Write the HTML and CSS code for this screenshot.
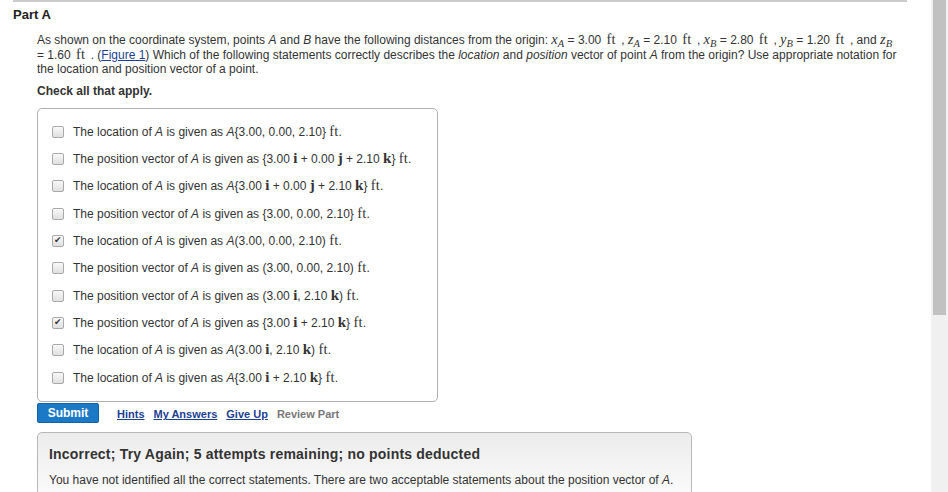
FILE: index.html
```html
<!DOCTYPE html>
<html lang="en">
<head>
    <meta charset="UTF-8">
    <title>Part A</title>
    <link rel="stylesheet" href="styles.css">
</head>
<body>

<div class="page">
    <div class="part">
        <h2 class="part-title">Part A</h2>

        <div class="part-body">
            <p class="prompt">
                As shown on the coordinate system, points <i>A</i> and <i>B</i> have the following distances from the origin:
                <span class="m"><i>x</i><sub>A</sub></span> = 3.00 <span class="unit">ft</span> ,
                <span class="m"><i>z</i><sub>A</sub></span> = 2.10 <span class="unit">ft</span> ,
                <span class="m"><i>x</i><sub>B</sub></span> = 2.80 <span class="unit">ft</span> ,
                <span class="m"><i>y</i><sub>B</sub></span> = 1.20 <span class="unit">ft</span> , and
                <span class="m"><i>z</i><sub>B</sub></span> <span class="nw">= 1.60</span> <span class="unit">ft</span> .
                (<a href="#">Figure 1</a>) Which of the following statements correctly describes the <i>location</i> and <i>position</i>
                vector of point <i>A</i> from the origin? Use appropriate notation for the location and position vector of a point.
            </p>

            <p class="instruction">Check all that apply.</p>

            <ul class="choices">
                <li class="choice">
                    <input type="checkbox" id="c1">
                    <label for="c1">The location of <i>A</i> is given as <i>A</i>{3.00, 0.00, 2.10} <span class="unit">ft</span>.</label>
                </li>
                <li class="choice">
                    <input type="checkbox" id="c2">
                    <label for="c2">The position vector of <i>A</i> is given as {3.00 <b class="vec">i</b> + 0.00 <b class="vec">j</b> + 2.10 <b class="vec">k</b>} <span class="unit">ft</span>.</label>
                </li>
                <li class="choice">
                    <input type="checkbox" id="c3">
                    <label for="c3">The location of <i>A</i> is given as <i>A</i>{3.00 <b class="vec">i</b> + 0.00 <b class="vec">j</b> + 2.10 <b class="vec">k</b>} <span class="unit">ft</span>.</label>
                </li>
                <li class="choice">
                    <input type="checkbox" id="c4">
                    <label for="c4">The position vector of <i>A</i> is given as {3.00, 0.00, 2.10} <span class="unit">ft</span>.</label>
                </li>
                <li class="choice">
                    <input type="checkbox" id="c5" checked>
                    <label for="c5">The location of <i>A</i> is given as <i>A</i>(3.00, 0.00, 2.10) <span class="unit">ft</span>.</label>
                </li>
                <li class="choice">
                    <input type="checkbox" id="c6">
                    <label for="c6">The position vector of <i>A</i> is given as (3.00, 0.00, 2.10) <span class="unit">ft</span>.</label>
                </li>
                <li class="choice">
                    <input type="checkbox" id="c7">
                    <label for="c7">The position vector of <i>A</i> is given as (3.00 <b class="vec">i</b>, 2.10 <b class="vec">k</b>) <span class="unit">ft</span>.</label>
                </li>
                <li class="choice">
                    <input type="checkbox" id="c8" checked>
                    <label for="c8">The position vector of <i>A</i> is given as {3.00 <b class="vec">i</b> + 2.10 <b class="vec">k</b>} <span class="unit">ft</span>.</label>
                </li>
                <li class="choice">
                    <input type="checkbox" id="c9">
                    <label for="c9">The location of <i>A</i> is given as <i>A</i>(3.00 <b class="vec">i</b>, 2.10 <b class="vec">k</b>) <span class="unit">ft</span>.</label>
                </li>
                <li class="choice">
                    <input type="checkbox" id="c10">
                    <label for="c10">The location of <i>A</i> is given as <i>A</i>{3.00 <b class="vec">i</b> + 2.10 <b class="vec">k</b>} <span class="unit">ft</span>.</label>
                </li>
            </ul>

            <div class="actions">
                <button type="button" class="submit">Submit</button>
                <a href="#" class="action-link">Hints</a>
                <a href="#" class="action-link">My Answers</a>
                <a href="#" class="action-link">Give Up</a>
                <span class="action-off">Review Part</span>
            </div>

            <div class="feedback">
                <div class="feedback-title">Incorrect; Try Again; 5 attempts remaining; no points deducted</div>
                <p class="feedback-text">You have not identified all the correct statements. There are two acceptable statements about the position vector of <i>A</i>.</p>
            </div>
        </div>
    </div>
</div>

<!-- window scrollbar, drawn on top of the page -->
<div class="scrollbar"><div class="scrollbar-thumb"></div></div>

</body>
</html>
```

FILE: styles.css
```css
html {
    overflow: hidden;
}

body {
    margin: 0;
    font-family: "Liberation Sans", Arial, sans-serif;
    font-size: 12px;
    color: #333;
}

.scrollbar {
    position: fixed;
    top: 0;
    right: 0;
    width: 17px;
    height: 100%;
    background: #f0f0f0;
}

.scrollbar-thumb {
    margin-left: 2px;
    width: 13px;
    height: 315px;
    background: #c1c1c1;
}

.page {
    min-height: 768px;
    padding-left: 13px;
}

.part {
    width: 894px;
    border-top: 2px solid #ccc;
}

.part-title {
    margin: 0;
    padding-top: 5px;
    font-size: 13px;
    line-height: 16px;
    font-weight: bold;
    color: #222;
}

.part-body {
    padding-left: 24px;
}

.prompt {
    margin: 10px 0 0;
    width: 870px;
    line-height: 14.5px;
}

.nw {
    white-space: nowrap;
}

/* inline math keeps the line height of the text around it */
.m {
    font-family: "Liberation Serif", "Times New Roman", serif;
    font-size: 14.5px;
    line-height: 0;
}

.m sub {
    font-size: 10.5px;
    font-style: italic;
    vertical-align: -3px;
    line-height: 0;
}

.unit {
    font-family: "Liberation Serif", "Times New Roman", serif;
    font-size: 14.5px;
    letter-spacing: 0.2px;
    line-height: 0;
}

.prompt .unit {
    margin: 0 2px;
}

.vec {
    font-family: "Liberation Serif", "Times New Roman", serif;
    font-size: 15px;
    font-weight: bold;
    line-height: 0;
}

a {
    color: #1c3f94;
}

.instruction {
    margin: 7px 0 0;
    font-weight: bold;
    line-height: 14.5px;
}

.choices {
    list-style: none;
    margin: 10px 0 0;
    padding: 9px 0 10px 13px;
    width: 386px;
    border: 1px solid #b0b0b0;
    border-radius: 5px;
}

.choice {
    display: flex;
    align-items: center;
    height: 27.35px;
}

.choice input {
    appearance: none;
    -webkit-appearance: none;
    box-sizing: border-box;
    margin: 0 9px 0 1px;
    width: 12px;
    height: 12px;
    border: 1px solid #a9a9a9;
    border-radius: 2px;
    background: linear-gradient(#f8f8f8, #e0e0e0);
    position: relative;
}

.choice input:checked::after {
    content: "\2714";
    position: absolute;
    left: 1px;
    top: -1px;
    font-family: "DejaVu Sans", sans-serif;
    font-size: 9px;
    color: #333;
}

.actions {
    display: flex;
    align-items: center;
    margin-top: 1px;
    height: 20px;
}

.submit {
    width: 62px;
    height: 20px;
    padding: 0;
    border: 1px solid #1262a6;
    border-radius: 2px;
    background-color: #1b79c6;
    color: white;
    font-family: "Liberation Sans", Arial, sans-serif;
    font-size: 12px;
    font-weight: bold;
    margin-right: 9px;
}

.action-link,
.action-off {
    margin-left: 9px;
    padding-top: 2px;
    font-size: 11px;
    font-weight: bold;
}

.action-off {
    color: #777;
}

.feedback {
    margin-top: 9px;
    width: 631px;
    padding: 12px 11px 8px;
    border: 1px solid #b8b8b8;
    border-radius: 5px;
    background: linear-gradient(#ececec, #fafafa 60px);
}

.feedback-title {
    font-size: 14px;
    font-weight: bold;
    line-height: 18px;
    letter-spacing: 0.2px;
}

.feedback-text {
    margin: 10px 0 0;
    line-height: 14px;
}
```
